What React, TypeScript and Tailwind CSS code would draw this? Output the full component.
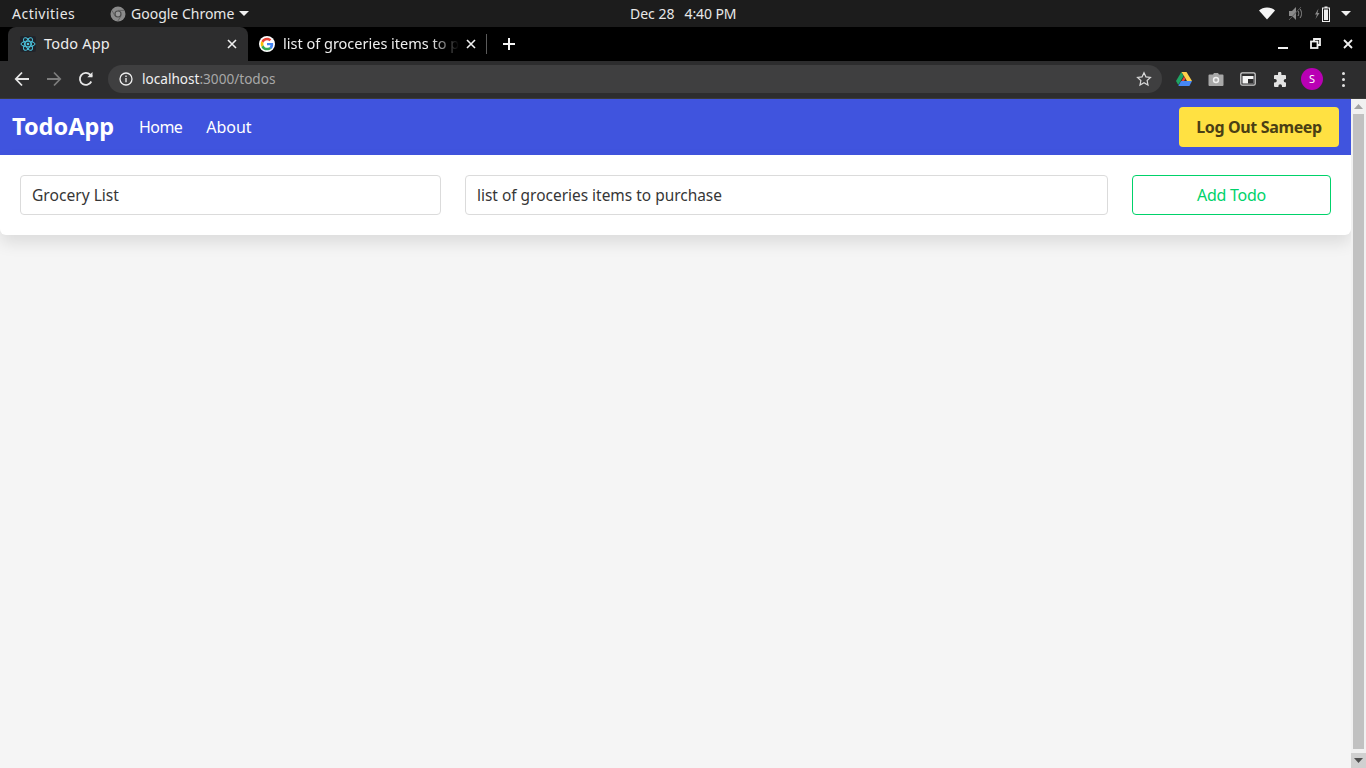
const font = { fontFamily: '"Noto Sans", sans-serif' };

function ReactIcon() {
  return (
    <div className="w-4 h-4 bg-[#20232a] rounded-[2px] flex items-center justify-center">
      <svg width="16" height="16" viewBox="0 0 16 16" fill="none" stroke="#4cc6e0" strokeWidth="1">
        <ellipse cx="8" cy="8" rx="7" ry="2.8" />
        <ellipse cx="8" cy="8" rx="7" ry="2.8" transform="rotate(60 8 8)" />
        <ellipse cx="8" cy="8" rx="7" ry="2.8" transform="rotate(120 8 8)" />
        <circle cx="8" cy="8" r="1.3" fill="#4cc6e0" stroke="none" />
      </svg>
    </div>
  );
}

function GoogleIcon() {
  return (
    <svg width="16" height="16" viewBox="0 0 48 48">
      <circle cx="24" cy="24" r="24" fill="#fff" />
      <path fill="#EA4335" d="M24 12.5c3 0 5.6 1 7.6 3l5.6-5.6C33.800 6.800 29.300 5 24 5 16.600 5 10.200 9.200 7.100 15.400l6.500 5.100C15.200 15.800 19.200 12.500 24 12.500z" />
      <path fill="#4285F4" d="M42.600 24.500c0-1.400-.1-2.400-.4-3.500H24v7.100h10.500c-.4 2.400-1.700 4.600-4 6.200l6.300 4.900c3.700-3.400 5.800-8.500 5.800-14.700z" />
      <path fill="#FBBC05" d="M13.600 27.500c-.4-1.100-.6-2.300-.6-3.500s.2-2.400.6-3.500l-6.500-5.100C5.800 18 5 20.900 5 24s.8 6 2.100 8.600l6.500-5.100z" />
      <path fill="#34A853" d="M24 43c5.100 0 9.400-1.700 12.800-4.600l-6.300-4.900c-1.700 1.200-3.900 2-6.500 2-4.800 0-8.800-3.300-10.400-7.900l-6.500 5.100C10.200 38.800 16.600 43 24 43z" />
    </svg>
  );
}

function CloseIcon({ size = 10, sw = 1.6 }: { size?: number; sw?: number }) {
  return (
    <svg width={size} height={size} viewBox="0 0 10 10" stroke="#f0f0f0" strokeWidth={sw} fill="none">
      <path d="M1 1l8 8M9 1l-8 8" />
    </svg>
  );
}

function SystemBar() {
  return (
    <div className="h-[27px] bg-[#1c1c1c] flex items-center text-[14px] text-[#e8e8e8] relative shrink-0">
      <span className="ml-3 w-[98px] tracking-[0.5px]">Activities</span>
      <svg width="16" height="16" viewBox="0 0 16 16">
        <circle cx="8" cy="8" r="7.500" fill="#8a8a8a" />
        <circle cx="8" cy="8" r="3.600" fill="#4a4a4a" />
        <circle cx="8" cy="8" r="2.400" fill="#9a9a9a" />
        <path d="M8 4.400h6.400M5 10l-3-5.500M11 10l-3.500 5.500" stroke="#5a5a5a" strokeWidth="0.800" />
      </svg>
      <span className="ml-[5px]">Google Chrome</span>
      <svg width="10" height="5" viewBox="0 0 10 5" className="ml-[5px]"><path d="M0 0h10L5 5z" fill="#f0f0f0" /></svg>
      <div className="absolute left-[630px] top-0 h-full flex items-center gap-[10px]">
        <span>Dec 28</span>
        <span className="tracking-[-0.1px]">4:40 PM</span>
      </div>
      <div className="ml-auto flex items-center h-full pr-[15px]">
        <svg width="16" height="13" viewBox="0 0 16 13" className="mr-[13px]"><path d="M0 3.500C2 1.500 5 .5 8 .5s6 1 8 3L8 12.500z" fill="#f5f5f5" /></svg>
        <svg width="15" height="15" viewBox="0 0 15 15" className="mr-[11px]" fill="none">
          <path d="M1 5h3l4-4v13l-4-4H1z" fill="#8a8a8a" />
          <path d="M10 5c1 1.500 1 3.500 0 5M12 3c2 2.500 2 6.500 0 9" stroke="#8a8a8a" strokeWidth="1" />
          <path d="M1 14L13 1" stroke="#5a5a5a" strokeWidth="1" />
        </svg>
        <svg width="16" height="16" viewBox="0 0 16 16" className="mr-[11px]">
          <path d="M4.500 2.500L1 8.500h2L1.500 13 5.500 7h-2z" fill="#8a8a8a" />
          <rect x="8.500" y="2" width="7" height="13.500" fill="none" stroke="#f0f0f0" strokeWidth="1" />
          <rect x="10" y="3.500" width="4" height="10.500" fill="#f0f0f0" />
          <rect x="10.500" y="0.500" width="3" height="1.500" fill="#f0f0f0" />
        </svg>
        <svg width="10" height="5" viewBox="0 0 10 5"><path d="M0 0h10L5 5z" fill="#f0f0f0" /></svg>
      </div>
    </div>
  );
}

function TabStrip() {
  return (
    <div className="h-[34px] bg-black flex items-stretch text-[14.5px] shrink-0">
      <div className="ml-2 w-[240px] h-[34px] bg-[#2d2d2e] rounded-t-[8px] flex items-center pl-3 text-[#eeeeee] relative">
        <ReactIcon />
        <span className="ml-2 pb-px tracking-[0.2px]">Todo App</span>
        <span className="absolute left-[219px] top-[12px]"><CloseIcon /></span>
      </div>
      <div className="w-[238px] flex items-center pl-[11px] text-[#eeeeee] relative">
        <GoogleIcon />
        <span className="ml-2 w-[176px] overflow-hidden whitespace-nowrap pb-px" style={{ WebkitMaskImage: 'linear-gradient(to right, #000 84%, transparent)' }}>list of groceries items to p</span>
        <span className="absolute left-[218px] top-[12px]"><CloseIcon /></span>
      </div>
      <div className="w-px h-5 bg-[#5a5a5a] self-center" />
      <svg width="12" height="12" viewBox="0 0 12 12" className="self-center ml-[16px]" stroke="#f5f5f5" strokeWidth="2"><path d="M6 0v12M0 6h12" /></svg>
      <div className="ml-auto flex items-center pr-[13px]">
        <div className="w-[10px] h-[2px] bg-[#f0f0f0] mt-[8px] mr-[22px]" />
        <svg width="11" height="11" viewBox="0 0 11 11" className="mr-[22px] -mt-[2px]" fill="none" stroke="#f0f0f0" strokeWidth="1.800">
          <path d="M4 3V1h6v6H8" />
          <rect x="1" y="3.500" width="6.500" height="6.500" />
        </svg>
        <CloseIcon size={10} sw={1.800} />
      </div>
    </div>
  );
}

function Toolbar() {
  return (
    <div className="h-[38px] bg-[#2d2d2e] flex items-center shrink-0 border-b border-[#3a3a3a] pb-px">
      <svg width="16" height="16" viewBox="0 0 16 16" className="ml-[14px]" fill="none" stroke="#e6e6e6" strokeWidth="1.800"><path d="M15 8H2M8 1.500L1.800 8 8 14.500" /></svg>
      <svg width="16" height="16" viewBox="0 0 16 16" className="ml-[16px]" fill="none" stroke="#7d7d7d" strokeWidth="1.800"><path d="M1 8h13M8 1.500L14.200 8 8 14.500" /></svg>
      <svg width="16" height="16" viewBox="0 0 16 16" className="ml-[16px]" fill="none" stroke="#e6e6e6" strokeWidth="1.800">
        <path d="M13.300 10.500A6 6 0 1 1 12.200 3.700L14 5.500" />
        <path d="M14.500 1v5.200H9.300" fill="#e6e6e6" stroke="none" />
      </svg>
      <div className="ml-[14px] w-[1054px] h-[28px] rounded-full bg-[#3f3f40] flex items-center pl-[11px] text-[13.6px] relative">
        <svg width="14" height="14" viewBox="0 0 14 14" fill="none" stroke="#eeeeee" strokeWidth="1.300">
          <circle cx="7" cy="7" r="6" />
          <path d="M7 6v4.200M7 3.500v1.400" />
        </svg>
        <span className="ml-[9px] text-[#f0f0f0]">localhost<span className="text-[#a8a8a8]">:3000/todos</span></span>
        <svg width="16" height="16" viewBox="0 0 24 24" className="absolute right-[10px] top-[6px]" fill="none" stroke="#d8d8d8" strokeWidth="1.800">
          <path d="M12 2.500l2.900 6.300 6.800.8-5 4.700 1.300 6.800-6-3.400-6 3.400 1.300-6.800-5-4.700 6.800-.8z" />
        </svg>
      </div>
      <svg width="16" height="14" viewBox="0 0 16 14" className="ml-[14px]">
        <path d="M5.300 0L0 9l2.300 4 5.300-9z" fill="#1fa463" />
        <path d="M5.500 0h5L16 9h-5z" fill="#ffd04b" />
        <path d="M2.300 14l2.700-5h11l-2.600 5z" fill="#4687f4" />
        <path d="M5.500 9l2.500-4.500L9.500 7 8 9z" fill="#ea4335" />
      </svg>
      <svg width="16" height="14" viewBox="0 0 16 14" className="ml-[16px]">
        <path d="M1.500 2.500H5L6 1h4l1 1.500h3.500a1 1 0 0 1 1 1V13a1 1 0 0 1-1 1h-13a1 1 0 0 1-1-1V3.500a1 1 0 0 1 1-1z" fill="#a8a8a8" />
        <circle cx="8" cy="8" r="3.200" fill="#f0f0f0" />
        <circle cx="8" cy="8" r="1.700" fill="#a8a8a8" />
      </svg>
      <svg width="16" height="14" viewBox="0 0 16 14" className="ml-[16px]" fill="none">
        <rect x="0.800" y="0.800" width="14.400" height="12.400" rx="1.500" stroke="#cfcfcf" strokeWidth="1.300" />
        <rect x="2.500" y="4" width="11" height="7.500" fill="#f5f5f5" />
        <rect x="8" y="7" width="5.500" height="4.500" fill="#2d2d2e" />
      </svg>
      <svg width="15" height="15" viewBox="0 0 15 15" className="ml-[17px]">
        <path d="M5 1.500a1.700 1.700 0 0 1 3.400 0V3H12a1 1 0 0 1 1 1v3h-.5a1.800 1.800 0 0 0 0 3.600h.5V14a1 1 0 0 1-1 1H9v-1a1.800 1.800 0 0 0-3.600 0v1H2a1 1 0 0 1-1-1v-3.500h1a1.800 1.800 0 0 0 0-3.600H1V4a1 1 0 0 1 1-1h3z" fill="#e2e2e2" />
      </svg>
      <div className="ml-[13px] w-[22px] h-[22px] rounded-full bg-[#b900b4] flex items-center justify-center text-[11px] text-white">S</div>
      <div className="ml-[19px] flex flex-col gap-[3px]">
        <div className="w-[3px] h-[3px] rounded-full bg-[#e2e2e2]" />
        <div className="w-[3px] h-[3px] rounded-full bg-[#e2e2e2]" />
        <div className="w-[3px] h-[3px] rounded-full bg-[#e2e2e2]" />
      </div>
    </div>
  );
}

function Scrollbar() {
  return (
    <div className="w-[15px] bg-[#f1f1f1] flex flex-col shrink-0">
      <div className="h-[15px] flex items-center justify-center">
        <svg width="9" height="5" viewBox="0 0 9 5"><path d="M4.500 0L9 5H0z" fill="#a3a3a3" /></svg>
      </div>
      <div className="flex-1 mx-[2px] bg-[#c1c1c1]" />
      <div className="h-[15px] mt-[4px] bg-[#d0d0d0] flex items-center justify-center">
        <svg width="9" height="5" viewBox="0 0 9 5"><path d="M0 0h9L4.500 5z" fill="#505050" /></svg>
      </div>
    </div>
  );
}

export default function App() {
  return (
    <div className="h-[768px] w-[1366px] overflow-hidden flex flex-col" style={font}>
      <SystemBar />
      <TabStrip />
      <Toolbar />
      <div className="flex-1 flex min-h-0">
        <div className="flex-1 bg-[#f5f5f5] min-w-0">
          <nav className="h-[56px] bg-[#4054de] flex items-center pl-3 pr-3 text-white">
            <span className="text-[23.5px] font-bold mr-[25px]">TodoApp</span>
            <span className="text-[16px] tracking-[-0.6px] mr-6">Home</span>
            <span className="text-[16px]">About</span>
            <button className="ml-auto w-[160px] h-10 bg-[#ffe142] rounded-[4px] text-[#4a3f14] text-[16px] tracking-[-0.35px] font-bold">Log Out Sameep</button>
          </nav>
          <div className="h-[80px] bg-white rounded-b-[6px] shadow-[0_8px_16px_rgba(0,0,0,0.1)] px-5 flex items-center gap-6">
            <input readOnly value="Grocery List" className="w-[421px] h-10 border border-[#dbdbdb] rounded-[4px] px-[11px] text-[15.6px] text-[#363636] outline-none bg-white" />
            <input readOnly value="list of groceries items to purchase" className="w-[643px] h-10 border border-[#dbdbdb] rounded-[4px] px-[11px] text-[15.45px] text-[#363636] outline-none bg-white" />
            <button className="flex-1 h-10 border border-[#00d26a] rounded-[4px] text-[#00d26a] text-[16px] tracking-[-0.25px] bg-white">Add Todo</button>
          </div>
        </div>
        <Scrollbar />
      </div>
    </div>
  );
}
